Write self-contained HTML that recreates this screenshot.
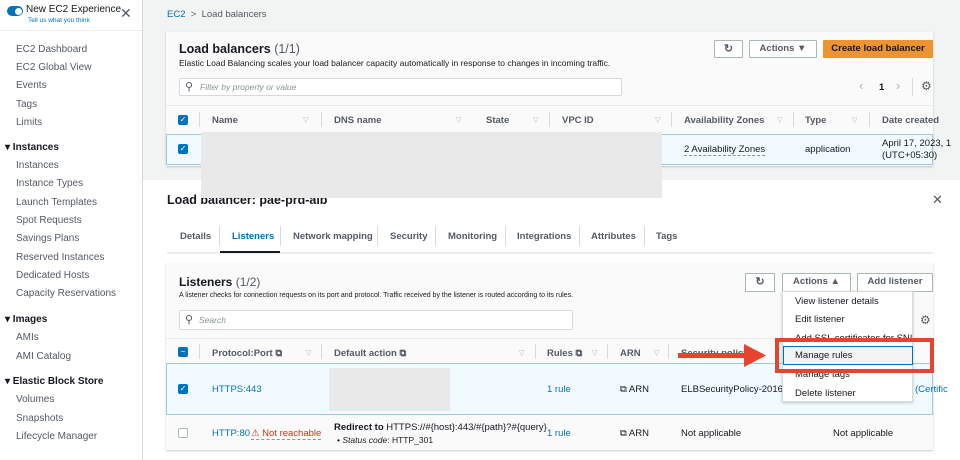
<!DOCTYPE html>
<html><head><meta charset="utf-8"><style>
*{margin:0;padding:0;box-sizing:border-box}
body{width:960px;height:460px;overflow:hidden;position:relative;font-family:"Liberation Sans",sans-serif;font-size:9.5px;color:#16191f;background:#fff}
.a{position:absolute;white-space:nowrap}
.side{left:0;top:0;width:143px;height:460px;background:#fff;border-right:1px solid #d5dbdb}
.si{left:16px;font-size:10px;color:#545b64}
.sh{left:5px;font-size:10px;font-weight:bold;color:#16191f}
.b{font-weight:bold}
.gray{color:#545b64}
.blue{color:#0073bb}
.cb{width:10px;height:10px;border-radius:2px;background:#0073bb;color:#fff;font-size:8px;line-height:10px;text-align:center}
.cbe{width:10px;height:10px;border-radius:2px;border:1px solid #aab7b8;background:#fff}
.btn{height:18px;border:1px solid #aab7b8;background:#fff;font-weight:bold;color:#545b64;font-size:9.5px;text-align:center;line-height:16px;border-radius:1px}
.tri{color:#aab7b8;font-size:7px}
.sep{width:1px;background:#d5dbdb}
.hd{font-weight:bold;color:#545b64;font-size:9.5px}
</style></head><body>
<div class="a" style="left:143px;top:0;width:817px;height:180px;background:#f2f3f3"></div>
<div class="a side"></div>
<div class="a" style="left:7px;top:6px;width:16px;height:10px;border-radius:5px;background:#0073bb"></div>
<div class="a" style="left:15px;top:7.5px;width:7px;height:7px;border-radius:50%;background:#fff"></div>
<div class="a" style="left:26px;top:4px;font-size:10px">New EC2 Experience</div>
<div class="a blue" style="left:28px;top:17px;font-size:6.5px">Tell us what you think</div>
<div class="a" style="left:120px;top:5px;font-size:14px;color:#545b64">✕</div>
<div class="a" style="left:0;top:30px;width:142px;height:1px;background:#eaeded"></div>
<div class="a si" style="top:44px">EC2 Dashboard</div>
<div class="a si" style="top:62px">EC2 Global View</div>
<div class="a si" style="top:80px">Events</div>
<div class="a si" style="top:99px">Tags</div>
<div class="a si" style="top:117px">Limits</div>
<div class="a sh" style="top:142px">▾ Instances</div>
<div class="a si" style="top:160px">Instances</div>
<div class="a si" style="top:178px">Instance Types</div>
<div class="a si" style="top:197px">Launch Templates</div>
<div class="a si" style="top:215px">Spot Requests</div>
<div class="a si" style="top:233px">Savings Plans</div>
<div class="a si" style="top:252px">Reserved Instances</div>
<div class="a si" style="top:270px">Dedicated Hosts</div>
<div class="a si" style="top:288px">Capacity Reservations</div>
<div class="a sh" style="top:314px">▾ Images</div>
<div class="a si" style="top:332px">AMIs</div>
<div class="a si" style="top:351px">AMI Catalog</div>
<div class="a sh" style="top:376px">▾ Elastic Block Store</div>
<div class="a si" style="top:394px">Volumes</div>
<div class="a si" style="top:413px">Snapshots</div>
<div class="a si" style="top:431px">Lifecycle Manager</div>

<div class="a" style="left:167px;top:9px;font-size:9.5px"><span class="blue">EC2</span> <span class="gray">&nbsp;&gt;&nbsp; Load balancers</span></div>
<div class="a" style="left:166px;top:32px;width:767px;height:134px;background:#fafafa;box-shadow:0 1px 2px rgba(0,0,0,.2)"></div>
<div class="a" style="left:179px;top:42px;font-size:12.5px"><b>Load balancers</b> <span class="gray">(1/1)</span></div>
<div class="a" style="left:179px;top:58px;font-size:8.5px;color:#16191f">Elastic Load Balancing scales your load balancer capacity automatically in response to changes in incoming traffic.</div>
<div class="a" style="left:179px;top:78px;width:443px;height:18px;border:1px solid #d5dbdb;background:#fff;border-radius:2px"></div>
<div class="a" style="left:185px;top:80px;font-size:11px;color:#545b64">⚲</div>
<div class="a" style="left:200px;top:82px;font-style:italic;color:#879596;font-size:8.5px">Filter by property or value</div>
<div class="a btn" style="left:714px;top:40px;width:29px;font-size:11px">↻</div>
<div class="a btn" style="left:749px;top:40px;width:68px">Actions ▼</div>
<div class="a btn" style="left:823px;top:40px;width:110px;background:#ec9332;border-color:#ec9332;color:#16191f">Create load balancer</div>
<div class="a" style="left:859px;top:78px;font-size:13px;color:#aab7b8">‹</div>
<div class="a b" style="left:879px;top:82px">1</div>
<div class="a" style="left:896px;top:78px;font-size:13px;color:#aab7b8">›</div>
<div class="a sep" style="left:912px;top:78px;height:18px"></div>
<div class="a" style="left:921px;top:79px;font-size:12px;color:#545b64">⚙</div>
<div class="a" style="left:166px;top:105px;width:767px;height:1px;background:#eaeded"></div>
<div class="a cb" style="left:178px;top:115px">✓</div>
<div class="a sep" style="left:199px;top:112px;height:15px"></div>
<div class="a hd" style="left:212px;top:115px">Name</div><div class="a tri" style="left:303px;top:116px">▽</div>
<div class="a sep" style="left:321px;top:112px;height:15px"></div>
<div class="a hd" style="left:334px;top:115px">DNS name</div><div class="a tri" style="left:456px;top:116px">▽</div>
<div class="a hd" style="left:486px;top:115px">State</div><div class="a tri" style="left:533px;top:116px">▽</div>
<div class="a sep" style="left:549px;top:112px;height:15px"></div>
<div class="a hd" style="left:562px;top:115px">VPC ID</div><div class="a tri" style="left:655px;top:116px">▽</div>
<div class="a sep" style="left:671px;top:112px;height:15px"></div>
<div class="a hd" style="left:684px;top:115px">Availability Zones</div><div class="a tri" style="left:777px;top:116px">▽</div>
<div class="a sep" style="left:793px;top:112px;height:15px"></div>
<div class="a hd" style="left:805px;top:115px">Type</div><div class="a tri" style="left:852px;top:116px">▽</div>
<div class="a sep" style="left:869px;top:112px;height:15px"></div>
<div class="a hd" style="left:882px;top:115px">Date created</div>
<div class="a" style="left:166px;top:134px;width:767px;height:31px;background:#f1faff;border:1px solid #99cbe4"></div>
<div class="a cb" style="left:178px;top:144px">✓</div>
<div class="a" style="left:684px;top:144px;border-bottom:1px dashed #879596">2 Availability Zones</div>
<div class="a" style="left:805px;top:144px">application</div>
<div class="a" style="left:882px;top:138px;line-height:12px">April 17, 2023, 1<br>(UTC+05:30)</div>

<div class="a b" style="left:167px;top:193px;font-size:12.5px">Load balancer: pae-prd-alb</div>
<div class="a" style="left:932px;top:192px;font-size:13px;color:#545b64">✕</div>
<div class="a" style="left:167px;top:252px;width:766px;height:2px;background:#eaeded"></div>
<div class="a hd" style="left:180px;top:231px">Details</div>
<div class="a sep" style="left:219px;top:226px;height:20px"></div>
<div class="a b blue" style="left:232px;top:231px">Listeners</div>
<div class="a" style="left:220px;top:251px;width:60px;height:2px;background:#16191f"></div>
<div class="a sep" style="left:280px;top:226px;height:20px"></div>
<div class="a hd" style="left:293px;top:231px">Network mapping</div>
<div class="a sep" style="left:377px;top:226px;height:20px"></div>
<div class="a hd" style="left:390px;top:231px">Security</div>
<div class="a sep" style="left:435px;top:226px;height:20px"></div>
<div class="a hd" style="left:448px;top:231px">Monitoring</div>
<div class="a sep" style="left:505px;top:226px;height:20px"></div>
<div class="a hd" style="left:517px;top:231px">Integrations</div>
<div class="a sep" style="left:579px;top:226px;height:20px"></div>
<div class="a hd" style="left:591px;top:231px">Attributes</div>
<div class="a sep" style="left:644px;top:226px;height:20px"></div>
<div class="a hd" style="left:656px;top:231px">Tags</div>

<div class="a" style="left:166px;top:263px;width:767px;height:187px;background:#fafafa;box-shadow:0 1px 2px rgba(0,0,0,.2)"></div>
<div class="a" style="left:179px;top:275px;font-size:12px"><b>Listeners</b> <span class="gray">(1/2)</span></div>
<div class="a" style="left:179px;top:292px;font-size:7px">A listener checks for connection requests on its port and protocol. Traffic received by the listener is routed according to its rules.</div>
<div class="a" style="left:179px;top:310px;width:394px;height:20px;border:1px solid #d5dbdb;background:#fff;border-radius:2px"></div>
<div class="a" style="left:185px;top:313px;font-size:11px;color:#545b64">⚲</div>
<div class="a" style="left:199px;top:315px;font-style:italic;color:#879596;font-size:8.5px">Search</div>
<div class="a btn" style="left:745px;top:273px;width:30px;height:19px;font-size:11px">↻</div>
<div class="a btn" style="left:782px;top:273px;width:69px;height:19px">Actions ▲</div>
<div class="a btn" style="left:857px;top:273px;width:76px;height:19px">Add listener</div>
<div class="a" style="left:920px;top:313px;font-size:12px;color:#545b64">⚙</div>
<div class="a" style="left:166px;top:338px;width:767px;height:1px;background:#eaeded"></div>
<div class="a cb" style="left:178px;top:347px">−</div>
<div class="a sep" style="left:199px;top:344px;height:15px"></div>
<div class="a hd" style="left:212px;top:348px">Protocol:Port ⧉</div><div class="a tri" style="left:306px;top:349px">▽</div>
<div class="a sep" style="left:321px;top:344px;height:15px"></div>
<div class="a hd" style="left:334px;top:348px">Default action ⧉</div><div class="a tri" style="left:519px;top:349px">▽</div>
<div class="a sep" style="left:535px;top:344px;height:15px"></div>
<div class="a hd" style="left:547px;top:348px">Rules ⧉</div><div class="a tri" style="left:592px;top:349px">▽</div>
<div class="a sep" style="left:607px;top:344px;height:15px"></div>
<div class="a hd" style="left:620px;top:348px">ARN</div><div class="a tri" style="left:654px;top:349px">▽</div>
<div class="a sep" style="left:668px;top:344px;height:15px"></div>
<div class="a hd" style="left:681px;top:348px">Security policy</div>
<div class="a" style="left:166px;top:363px;width:767px;height:52px;background:#f1faff;border:1px solid #99cbe4"></div>
<div class="a cb" style="left:178px;top:384px">✓</div>
<div class="a blue" style="left:212px;top:384px">HTTPS:443</div>
<div class="a" style="left:329px;top:368px;width:121px;height:43px;background:#e9e9e9"></div>
<div class="a blue" style="left:547px;top:384px">1 rule</div>
<div class="a" style="left:620px;top:384px">⧉ ARN</div>
<div class="a" style="left:681px;top:384px">ELBSecurityPolicy-2016-08</div>
<div class="a blue" style="left:915px;top:384px">(Certific</div>
<div class="a cbe" style="left:178px;top:428px"></div>
<div class="a blue" style="left:212px;top:428px">HTTP:80</div>
<div class="a" style="left:251px;top:428px;color:#d13212;border-bottom:1px dashed #879596">⚠ Not reachable</div>
<div class="a" style="left:334px;top:422px"><b>Redirect to</b> HTTPS://#{host}:443/#{path}?#{query}</div>
<div class="a" style="left:337px;top:435px;font-size:8.5px">• <i>Status code</i>: HTTP_301</div>
<div class="a blue" style="left:547px;top:428px">1 rule</div>
<div class="a" style="left:620px;top:428px">⧉ ARN</div>
<div class="a" style="left:681px;top:428px">Not applicable</div>
<div class="a" style="left:833px;top:428px">Not applicable</div>

<div class="a" style="left:201px;top:132px;width:461px;height:66px;background:#e9e9e9"></div>

<div class="a" style="left:782px;top:291px;width:131px;height:111px;background:#fff;border:1px solid #d5dbdb;box-shadow:0 1px 3px rgba(0,0,0,.2)"></div>
<div class="a" style="left:795px;top:296px">View listener details</div>
<div class="a" style="left:795px;top:314px">Edit listener</div>
<div class="a" style="left:795px;top:333px">Add SSL certificates for SNI</div>
<div class="a" style="left:795px;top:369px">Manage tags</div>
<div class="a" style="left:795px;top:388px">Delete listener</div>
<div class="a" style="left:783px;top:346px;width:130px;height:19px;background:#f2f3f3;border:1px solid #0073bb"></div>
<div class="a" style="left:795px;top:350px">Manage rules</div>
<div class="a" style="left:775px;top:338px;width:159px;height:35px;border:4px solid #e8432e"></div>
<svg class="a" style="left:676px;top:342px" width="92" height="26"><rect x="2" y="11" width="70" height="5" fill="#e8432e"/><polygon points="68,2 90,13.5 68,25" fill="#e8432e"/></svg>
</body></html>
